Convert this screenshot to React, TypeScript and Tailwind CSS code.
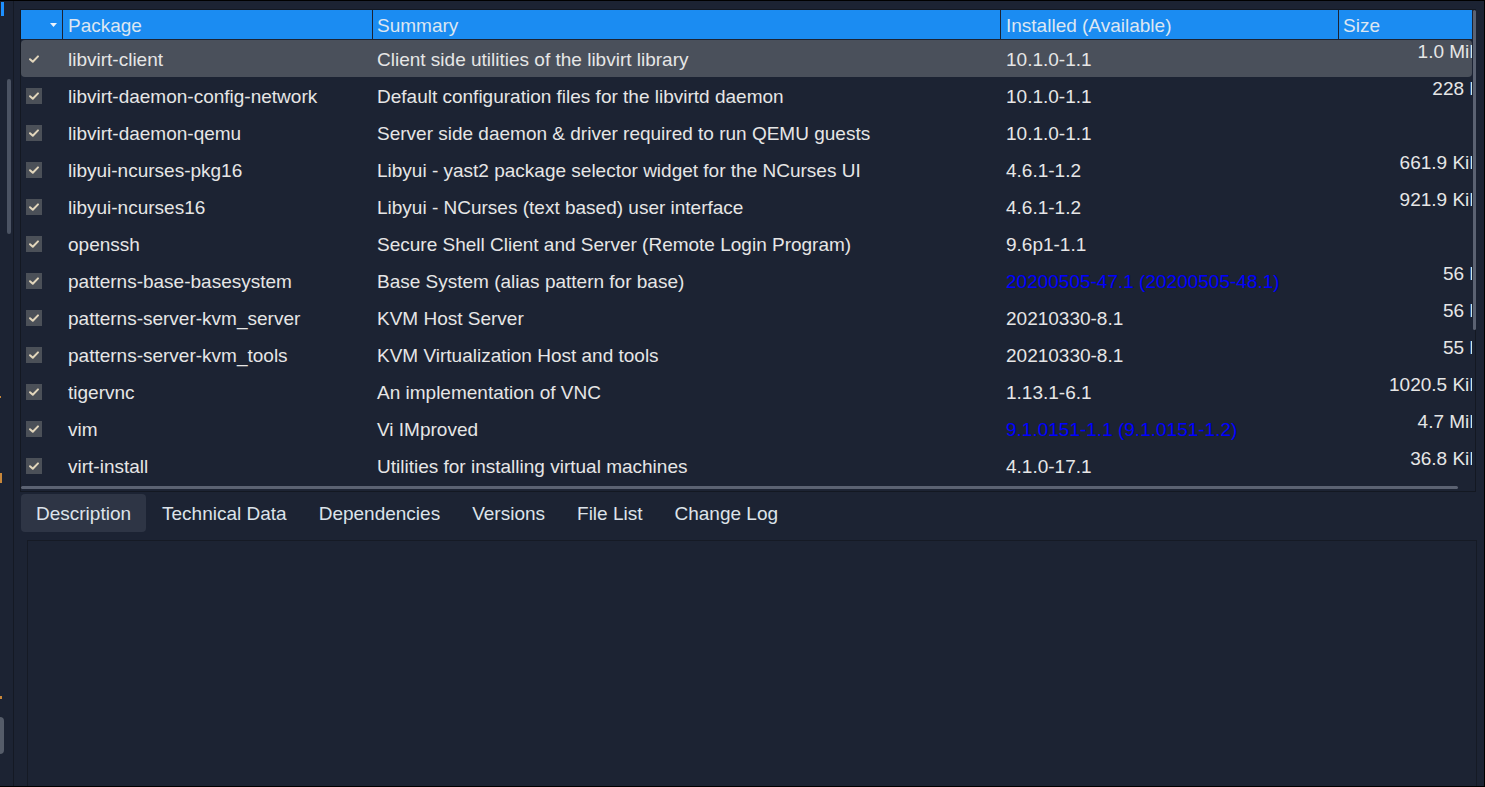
import React from "react";

type Pkg = {
  name: string;
  summary: string;
  version: string;
  size: string;
  update?: boolean;
};

const PACKAGES: Pkg[] = [
  { name: "libvirt-client", summary: "Client side utilities of the libvirt library", version: "10.1.0-1.1", size: "1.0 MiB" },
  { name: "libvirt-daemon-config-network", summary: "Default configuration files for the libvirtd daemon", version: "10.1.0-1.1", size: "228 B" },
  { name: "libvirt-daemon-qemu", summary: "Server side daemon & driver required to run QEMU guests", version: "10.1.0-1.1", size: "" },
  { name: "libyui-ncurses-pkg16", summary: "Libyui - yast2 package selector widget for the NCurses UI", version: "4.6.1-1.2", size: "661.9 KiB" },
  { name: "libyui-ncurses16", summary: "Libyui - NCurses (text based) user interface", version: "4.6.1-1.2", size: "921.9 KiB" },
  { name: "openssh", summary: "Secure Shell Client and Server (Remote Login Program)", version: "9.6p1-1.1", size: "" },
  { name: "patterns-base-basesystem", summary: "Base System (alias pattern for base)", version: "20200505-47.1 (20200505-48.1)", size: "56 B", update: true },
  { name: "patterns-server-kvm_server", summary: "KVM Host Server", version: "20210330-8.1", size: "56 B" },
  { name: "patterns-server-kvm_tools", summary: "KVM Virtualization Host and tools", version: "20210330-8.1", size: "55 B" },
  { name: "tigervnc", summary: "An implementation of VNC", version: "1.13.1-6.1", size: "1020.5 KiB" },
  { name: "vim", summary: "Vi IMproved", version: "9.1.0151-1.1 (9.1.0151-1.2)", size: "4.7 MiB", update: true },
  { name: "virt-install", summary: "Utilities for installing virtual machines", version: "4.1.0-17.1", size: "36.8 KiB" },
];

const TABS = ["Description", "Technical Data", "Dependencies", "Versions", "File List", "Change Log"];

function Check({ boxed }: { boxed: boolean }) {
  return (
    <div className={`ml-[5px] w-[16px] h-[16px] flex items-center justify-center ${boxed ? "bg-[#4b5058]" : ""}`}>
      <svg width="12" height="12" viewBox="0 0 12 12">
        <path d="M2 6.2 L4.8 8.8 L10 3.4" fill="none" stroke="#e2d6bc" strokeWidth="2" strokeLinecap="round" strokeLinejoin="round" />
      </svg>
    </div>
  );
}

function Sidebar() {
  return (
    <div className="w-[14px] shrink-0 flex flex-col border-r border-[#141924]">
      <div className="mt-[1px] ml-[1px] w-[3px] h-[14px] bg-[#1e90ff]" />
      <div className="mt-[63px] ml-[7px] w-[4px] h-[155px] rounded-full bg-[#4b5363]" />
      <div className="mt-[162px] w-[1px] h-[2px] bg-[#c8873a]" />
      <div className="mt-[75px] w-[2px] h-[10px] bg-[#c8873a]" />
      <div className="mt-[213px] w-[2px] h-[3px] bg-[#c8873a]" />
      <div className="mt-[18px] w-[4px] h-[37px] rounded-r bg-[#555c69]" />
    </div>
  );
}

function Row({ pkg, selected }: { pkg: Pkg; selected: boolean }) {
  return (
    <div
      className={`flex h-[37px] text-[19px] leading-[37px] text-[#e6e6e6] ${
        selected ? "bg-[#4a505b] rounded-[4px]" : ""
      }`}
    >
      <div className="w-[41px] shrink-0 flex items-center">
        <Check boxed={!selected} />
      </div>
      <div className="w-[310px] shrink-0 pl-[6px] pt-[1px] whitespace-nowrap overflow-hidden">{pkg.name}</div>
      <div className="w-[628px] shrink-0 pl-[5px] pt-[1px] whitespace-nowrap overflow-hidden">{pkg.summary}</div>
      <div
        className={`w-[338px] shrink-0 pl-[6px] pt-[1px] whitespace-nowrap overflow-hidden ${
          pkg.update ? "text-[#0000ff]" : ""
        }`}
      >
        {pkg.version}
      </div>
      <div className="w-[134px] shrink-0 overflow-hidden">
        <div className="w-[144px] text-right whitespace-nowrap leading-[21px] pt-[1px]">{pkg.size}</div>
      </div>
    </div>
  );
}

export default function App() {
  return (
    <div className="w-[1485px] h-[787px] flex bg-[#1c2333] border-y border-r border-black overflow-hidden font-['Liberation_Sans',Arial,sans-serif]">
      <Sidebar />

      <div className="flex-1 flex flex-col pt-[8px] pl-[6px]">
        {/* package table */}
        <div className="w-[1456px] border border-[#131822] flex">
          <div className="w-[1451px] flex flex-col">
            <div className="flex h-[30px] bg-[#1b8cf2] border-b border-[#1c2333] text-[19px] leading-[30px] text-[#dce6f2]">
              <div className="w-[41px] shrink-0 flex items-center justify-end pr-[5px]">
                <svg width="7" height="4" viewBox="0 0 7 4">
                  <path d="M0 0 L7 0 L3.5 4 Z" fill="#eef4fb" />
                </svg>
              </div>
              <div className="w-[310px] shrink-0 border-l border-[#1c2333] pl-[5px] pt-[1px]">Package</div>
              <div className="w-[628px] shrink-0 border-l border-[#1c2333] pl-[4px] pt-[1px]">Summary</div>
              <div className="w-[338px] shrink-0 border-l border-[#1c2333] pl-[5px] pt-[1px]">Installed (Available)</div>
              <div className="w-[134px] shrink-0 border-l border-[#1c2333] pl-[4px] pt-[1px]">Size</div>
            </div>
            {PACKAGES.map((p, i) => (
              <Row key={p.name} pkg={p} selected={i === 0} />
            ))}
            <div className="h-[7px] pt-[2px]">
              <div className="w-[1437px] h-[3px] rounded-full bg-[#5b6272]" />
            </div>
          </div>
          <div className="w-[3px] ml-[1px] flex flex-col">
            <div className="h-[320px] w-[3px] rounded-full bg-[#5b6272]" />
          </div>
        </div>

        {/* detail tabs */}
        <div className="mt-[2px] ml-[1px] flex h-[38px] text-[19px] text-[#dde3ea]">
          {TABS.map((t, i) => (
            <div
              key={t}
              className={`flex items-center pt-[3px] rounded-[4px] ${i === 0 ? "bg-[#2e3545] px-[15px]" : "px-[16px]"}`}
            >
              {t}
            </div>
          ))}
        </div>

        <div className="mt-[8px] ml-[7px] w-[1450px] flex-1 border-t border-x border-[#151a25]" />
      </div>
    </div>
  );
}
